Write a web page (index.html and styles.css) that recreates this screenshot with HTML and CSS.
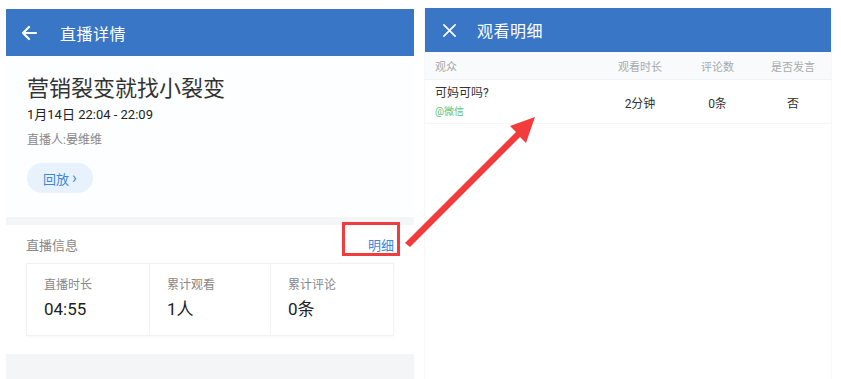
FILE: index.html
```html
<!DOCTYPE html>
<html lang="zh-CN">
  <head>
    <meta charset="UTF-8" />
    <meta name="viewport" content="width=device-width, initial-scale=1.0" />
    <title>直播详情</title>
    <link rel="stylesheet" href="styles.css">
  </head>
  <body>
    <div class="screens">
      <!-- Live detail -->
      <div class="panel">
        <div class="topbar">
          <svg class="topbar-icon" width="18" height="18" viewBox="0 0 18 18">
            <path d="M16 9H3M9 3L3 9l6 6" fill="none" stroke="#fff" stroke-width="2.2" stroke-linecap="round" stroke-linejoin="round" />
          </svg>
          <span class="topbar-title">直播详情</span>
        </div>

        <div class="live-card">
          <p class="live-title">营销裂变就找小裂变</p>
          <p class="live-time">1月14日 22:04 - 22:09</p>
          <p class="live-host">直播人:晏维维</p>
          <div class="replay">回放 <span class="chev">&rsaquo;</span></div>
        </div>

        <div class="gap-band"></div>

        <div class="info">
          <div class="info-head">
            <span class="info-label">直播信息</span>
            <span class="info-link">明细</span>
            <div class="mark-box"></div>
          </div>
          <div class="stats">
            <div class="stat">
              <p class="stat-label">直播时长</p>
              <p class="stat-value">04:55</p>
            </div>
            <div class="stat">
              <p class="stat-label">累计观看</p>
              <p class="stat-value">1人</p>
            </div>
            <div class="stat">
              <p class="stat-label">累计评论</p>
              <p class="stat-value">0条</p>
            </div>
          </div>
        </div>

        <div class="gap-band bottom"></div>
      </div>

      <!-- Watch detail -->
      <div class="panel right">
        <div class="topbar short">
          <svg class="topbar-icon" width="15" height="15" viewBox="0 0 16 16">
            <path d="M2 2l12 12M14 2L2 14" fill="none" stroke="#fff" stroke-width="1.8" stroke-linecap="round" />
          </svg>
          <span class="topbar-title">观看明细</span>
        </div>

        <div class="table-head">
          <span class="col-name">观众</span>
          <span class="col">观看时长</span>
          <span class="col">评论数</span>
          <span class="col">是否发言</span>
        </div>
        <div class="table-row">
          <div class="col-name">
            <p class="viewer">可妈可吗?</p>
            <p class="source">@微信</p>
          </div>
          <span class="col cell">2分钟</span>
          <span class="col cell">0条</span>
          <span class="col cell">否</span>
        </div>
      </div>
    </div>

    <!-- annotation arrow -->
    <svg class="arrow" width="841" height="379" viewBox="0 0 841 379">
      <polygon points="405,243 516,132 510,126 535,117 526,143 520,137 410,247" fill="#f23b3b" />
    </svg>
  </body>
</html>
```

FILE: styles.css
```css
* {
  margin: 0;
  padding: 0;
  box-sizing: border-box;
}
body {
  width: 841px;
  height: 379px;
  overflow: hidden;
  background-color: #fff;
  font-family: Roboto, "Noto Sans CJK SC", sans-serif;
  color: #333;
  position: relative;
}

.screens {
  display: flex;
  gap: 10px;
  padding: 8px 0 0 6px;
}

.panel {
  width: 408px;
  height: 371px;
  display: flex;
  flex-direction: column;
  background-color: #fff;
}
.panel.right {
  border-left: 1px solid #f6f7f8;
  border-right: 1px solid #f6f7f8;
}

.topbar {
  height: 47px;
  margin-top: 1px;
  background-color: #3a76c6;
  display: flex;
  align-items: center;
  padding-left: 14px;
  gap: 22px;
  flex-shrink: 0;
}
.topbar.short {
  height: 44px;
  margin-top: 0;
  padding-left: 17px;
  gap: 20px;
}
.topbar-title {
  color: #fff;
  font-size: 16px;
  letter-spacing: 0.5px;
}

/* live card */
.live-card {
  padding: 18px 21px 24px;
  background-color: #fdfeff;
}
.live-title {
  font-size: 22px;
  line-height: 30px;
  color: #333;
}
.live-time {
  font-size: 13px;
  line-height: 18px;
  color: #222;
  margin-top: 2px;
}
.live-host {
  font-size: 12px;
  line-height: 18px;
  color: #888;
  margin-top: 7px;
}
.replay {
  margin-top: 14px;
  width: 66px;
  height: 30px;
  border-radius: 15px;
  background-color: #e8f2fc;
  color: #3d87d6;
  font-size: 13px;
  display: flex;
  align-items: center;
  justify-content: center;
  gap: 3px;
}
.chev {
  font-size: 16px;
  line-height: 16px;
}

.gap-band {
  height: 8px;
  background-color: #f3f5f7;
  flex-shrink: 0;
}
.gap-band.bottom {
  flex: 1;
}

/* info section */
.info {
  padding: 0 20px 18px;
}
.info-head {
  position: relative;
  display: flex;
  justify-content: space-between;
  align-items: center;
  height: 38px;
  font-size: 13px;
}
.info-label {
  color: #888;
}
.info-link {
  color: #3d87d6;
}
.mark-box {
  position: absolute;
  right: -6px;
  top: -3px;
  width: 58px;
  height: 34px;
  border: 3px solid #f03c3c;
}
.stats {
  display: grid;
  grid-template-columns: 123px 121px 1fr;
  height: 73px;
  border: 1px solid #f1f2f4;
  box-shadow: 0 1px 3px rgba(0, 0, 0, 0.03);
}
.stat {
  padding: 13px 0 0 17px;
  border-right: 1px solid #f1f2f4;
}
.stat:last-child {
  border-right: none;
}
.stat-label {
  font-size: 12px;
  line-height: 16px;
  color: #888;
}
.stat-value {
  margin-top: 5px;
  font-size: 17px;
  line-height: 22px;
  color: #222;
}

/* table */
.table-head,
.table-row {
  display: grid;
  grid-template-columns: 1fr 80px 75px 76px;
  align-items: center;
  padding-left: 10px;
}
.table-head {
  height: 28px;
  background-color: #f8fafc;
  border-bottom: 1px solid #f0f2f4;
  font-size: 11px;
  color: #aaa;
}
.table-row {
  height: 44px;
  border-bottom: 1px solid #f5f6f7;
}
.col {
  text-align: center;
}
.cell {
  font-size: 12px;
  color: #333;
  padding-top: 2px;
}
.viewer {
  font-size: 12px;
  line-height: 18px;
  color: #333;
}
.source {
  font-size: 10px;
  line-height: 14px;
  margin-top: 3px;
  color: #63c278;
}

.arrow {
  position: absolute;
  top: 0;
  left: 0;
  pointer-events: none;
}
```
